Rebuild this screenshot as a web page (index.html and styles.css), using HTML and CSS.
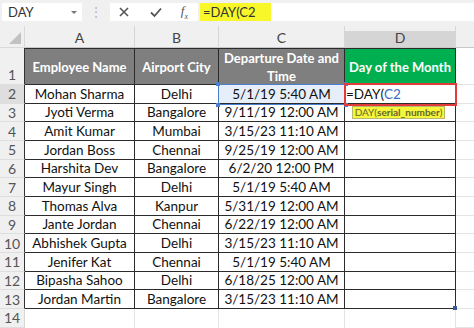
FILE: index.html
```html
<!DOCTYPE html>
<html lang="en">
<head>
    <meta charset="UTF-8">
    <title>DAY Function</title>
    <link rel="stylesheet" href="styles.css">
</head>
<body>

    <div class="toolbar">
        <div class="name-box">
            <span>DAY</span>
            <span class="caret"></span>
        </div>
        <div class="grip">&#8942;</div>
        <div class="fx-box">
            <svg width="14" height="14" viewBox="0 0 14 14"><path d="M3 3 L11 11 M11 3 L3 11" stroke="#555" stroke-width="1.6" fill="none"/></svg>
            <svg width="14" height="14" viewBox="0 0 14 14"><path d="M2 7.5 L5.5 11 L12 3.5" stroke="#555" stroke-width="1.8" fill="none"/></svg>
            <span class="fx">f<sub>x</sub></span>
        </div>
        <div class="formula"><span class="highlight">=DAY(C2</span></div>
    </div>

    <div class="sheet">
        <div class="corner"><span class="tri"></span></div>
        <div class="col-head">A</div>
        <div class="col-head">B</div>
        <div class="col-head">C</div>
        <div class="col-head active">D</div>
        <div class="col-head blank"></div>

        <div class="row-head tall">1</div>
        <div class="cell head first">Employee Name</div>
        <div class="cell head">Airport City</div>
        <div class="cell head">Departure Date and Time</div>
        <div class="cell head green">Day of the Month</div>
        <div class="spare"></div>

        <div class="row-head active">2</div>
        <div class="cell first">Mohan Sharma</div>
        <div class="cell">Delhi</div>
        <div class="cell ref">5/1/19 5:40 AM</div>
        <div class="cell edit">=DAY(<span class="blue">C2</span></div>
        <div class="spare"></div>

        <div class="row-head">3</div>
        <div class="cell first">Jyoti Verma</div>
        <div class="cell">Bangalore</div>
        <div class="cell">9/11/19 12:00 AM</div>
        <div class="cell"></div>
        <div class="spare"></div>

        <div class="row-head">4</div>
        <div class="cell first">Amit Kumar</div>
        <div class="cell">Mumbai</div>
        <div class="cell">3/15/23 11:10 AM</div>
        <div class="cell"></div>
        <div class="spare"></div>

        <div class="row-head">5</div>
        <div class="cell first">Jordan Boss</div>
        <div class="cell">Chennai</div>
        <div class="cell">9/25/19 12:00 AM</div>
        <div class="cell"></div>
        <div class="spare"></div>

        <div class="row-head">6</div>
        <div class="cell first">Harshita Dev</div>
        <div class="cell">Bangalore</div>
        <div class="cell">6/2/20 12:00 PM</div>
        <div class="cell"></div>
        <div class="spare"></div>

        <div class="row-head">7</div>
        <div class="cell first">Mayur Singh</div>
        <div class="cell">Delhi</div>
        <div class="cell">5/1/19 5:40 AM</div>
        <div class="cell"></div>
        <div class="spare"></div>

        <div class="row-head">8</div>
        <div class="cell first">Thomas Alva</div>
        <div class="cell">Kanpur</div>
        <div class="cell">5/31/19 12:00 AM</div>
        <div class="cell"></div>
        <div class="spare"></div>

        <div class="row-head">9</div>
        <div class="cell first">Jante Jordan</div>
        <div class="cell">Chennai</div>
        <div class="cell">6/22/19 12:00 AM</div>
        <div class="cell"></div>
        <div class="spare"></div>

        <div class="row-head">10</div>
        <div class="cell first">Abhishek Gupta</div>
        <div class="cell">Delhi</div>
        <div class="cell">3/15/23 11:10 AM</div>
        <div class="cell"></div>
        <div class="spare"></div>

        <div class="row-head">11</div>
        <div class="cell first">Jenifer Kat</div>
        <div class="cell">Chennai</div>
        <div class="cell">5/1/19 5:40 AM</div>
        <div class="cell"></div>
        <div class="spare"></div>

        <div class="row-head">12</div>
        <div class="cell first">Bipasha Sahoo</div>
        <div class="cell">Delhi</div>
        <div class="cell">6/18/25 12:00 AM</div>
        <div class="cell"></div>
        <div class="spare"></div>

        <div class="row-head">13</div>
        <div class="cell first">Jordan Martin</div>
        <div class="cell">Bangalore</div>
        <div class="cell">3/15/23 11:10 AM</div>
        <div class="cell"></div>
        <div class="spare"></div>

        <div class="row-head light">14</div>
        <div class="empty"></div>
        <div class="empty"></div>
        <div class="empty"></div>
        <div class="empty"></div>
        <div class="spare"></div>

        <!-- overlays -->
        <div class="ref-box">
            <span class="handle tl"></span>
            <span class="handle tr"></span>
            <span class="handle bl"></span>
            <span class="handle br"></span>
        </div>
        <div class="edit-box"></div>
        <div class="tip">DAY(<b>serial_number</b>)</div>
        <div class="fill-handle"></div>
    </div>

</body>
</html>
```

FILE: styles.css
```css
body {
    margin: 0;
    width: 474px;
    height: 328px;
    overflow: hidden;
    background-color: white;
    font-family: 'Lato', 'Liberation Sans', sans-serif;
}

/* formula bar */
.toolbar {
    height: 26px;
    display: flex;
    align-items: flex-start;
    padding: 3px 0 0 2px;
    box-sizing: border-box;
    background-color: #f0f0f0;
}

.name-box {
    width: 80px;
    height: 18px;
    background-color: white;
    display: flex;
    align-items: center;
    justify-content: space-between;
    padding: 0 5px 0 6px;
    box-sizing: border-box;
    font-size: 13px;
    color: #333;
}

.caret {
    width: 0;
    height: 0;
    border-left: 3px solid transparent;
    border-right: 3px solid transparent;
    border-top: 3px solid #777;
}

.grip {
    width: 28px;
    text-align: center;
    color: #b5b5b5;
    font-size: 12px;
    line-height: 18px;
}

.fx-box {
    width: 88px;
    height: 18px;
    background-color: white;
    display: flex;
    align-items: center;
    justify-content: space-between;
    padding: 0 10px 0 7px;
    box-sizing: border-box;
}

.fx {
    font-family: 'Liberation Serif', serif;
    font-style: italic;
    font-size: 13px;
    color: #555;
}

.fx sub {
    font-size: 8px;
}

.formula {
    flex: 1;
    height: 18px;
    margin-left: 2px;
    background-color: white;
    font-size: 13px;
    line-height: 18px;
}

.highlight {
    display: inline-block;
    width: 71px;
    padding-left: 3px;
    box-sizing: border-box;
    background-color: #f7f72a;
    color: #333;
}

/* sheet grid */
.sheet {
    position: relative;
    display: grid;
    grid-template-columns: 25px 110px 84px 126px 111px 1fr;
    grid-template-rows: 22px 37px repeat(12, 18.667px) 1fr;
    height: 302px;
}

.corner {
    position: relative;
    background-color: #f0f0f0;
    border-right: 1px solid #dadada;
    border-bottom: 1px solid #dadada;
}

.tri {
    position: absolute;
    right: 3px;
    bottom: 3px;
    width: 0;
    height: 0;
    border-left: 12px solid transparent;
    border-bottom: 12px solid #c2c2c2;
}

.col-head {
    background-color: #f0f0f0;
    border-right: 1px solid #d6d6d6;
    border-bottom: 1px solid #c8c8c8;
    display: flex;
    align-items: center;
    justify-content: center;
    font-size: 14px;
    color: #444;
    padding-top: 2px;
}

.col-head.active {
    background: linear-gradient(#f0f0f0 5px, #d5d5d5 5px);
}

.col-head.blank {
    border-right: none;
}

.row-head {
    background-color: #f0f0f0;
    border-right: 1px solid #333;
    border-bottom: 1px solid #dedede;
    display: flex;
    align-items: center;
    justify-content: center;
    font-size: 14px;
    color: #555;
}

.row-head.tall {
    align-items: flex-end;
    padding-bottom: 1px;
}

.row-head.active {
    background-color: #dedede;
}

.row-head.light {
    border-right-color: #d6d6d6;
}

.cell {
    border-right: 1px solid #2b2b2b;
    border-bottom: 1px solid #2b2b2b;
    display: flex;
    align-items: center;
    justify-content: center;
    font-size: 13.5px;
    color: #111;
    white-space: nowrap;
}

.cell.head {
    border-top: 1px solid #2b2b2b;
    background-color: #7f7f7f;
    color: white;
    font-weight: bold;
    font-size: 13px;
    text-align: center;
    white-space: normal;
    line-height: 18px;
    padding: 0 1px;
}

.cell.green {
    background-color: #00b050;
}

.cell.ref {
    background-color: #e6eef9;
}

.cell.edit {
    justify-content: flex-start;
    padding-left: 1px;
}

.blue {
    color: #3b6cc4;
}

.spare {
    border-bottom: 1px solid #e4e4e4;
}

.empty {
    border-right: 1px solid #e4e4e4;
}

/* overlays */
.ref-box {
    position: absolute;
    left: 218px;
    top: 58px;
    width: 128px;
    height: 21px;
    border: 1px solid #4a7fd0;
    box-sizing: border-box;
}

.handle {
    position: absolute;
    width: 4px;
    height: 4px;
    background-color: #4a7fd0;
}

.handle.tl { left: -3px; top: -3px; }
.handle.tr { right: -3px; top: -3px; }
.handle.bl { left: -3px; bottom: -3px; }
.handle.br { right: -3px; bottom: -3px; }

.edit-box {
    position: absolute;
    left: 344px;
    top: 57px;
    width: 113px;
    height: 23px;
    border: 2px solid #e23b3b;
    box-sizing: border-box;
}

.tip {
    position: absolute;
    left: 352px;
    top: 80px;
    width: 93px;
    height: 13px;
    background-color: #f5f53a;
    border: 1px solid #b9b96a;
    box-sizing: border-box;
    font-size: 10px;
    line-height: 11px;
    text-align: center;
    color: #66662e;
}

.fill-handle {
    position: absolute;
    left: 453px;
    top: 280px;
    width: 4px;
    height: 4px;
    background-color: #3c5a9a;
}
```
